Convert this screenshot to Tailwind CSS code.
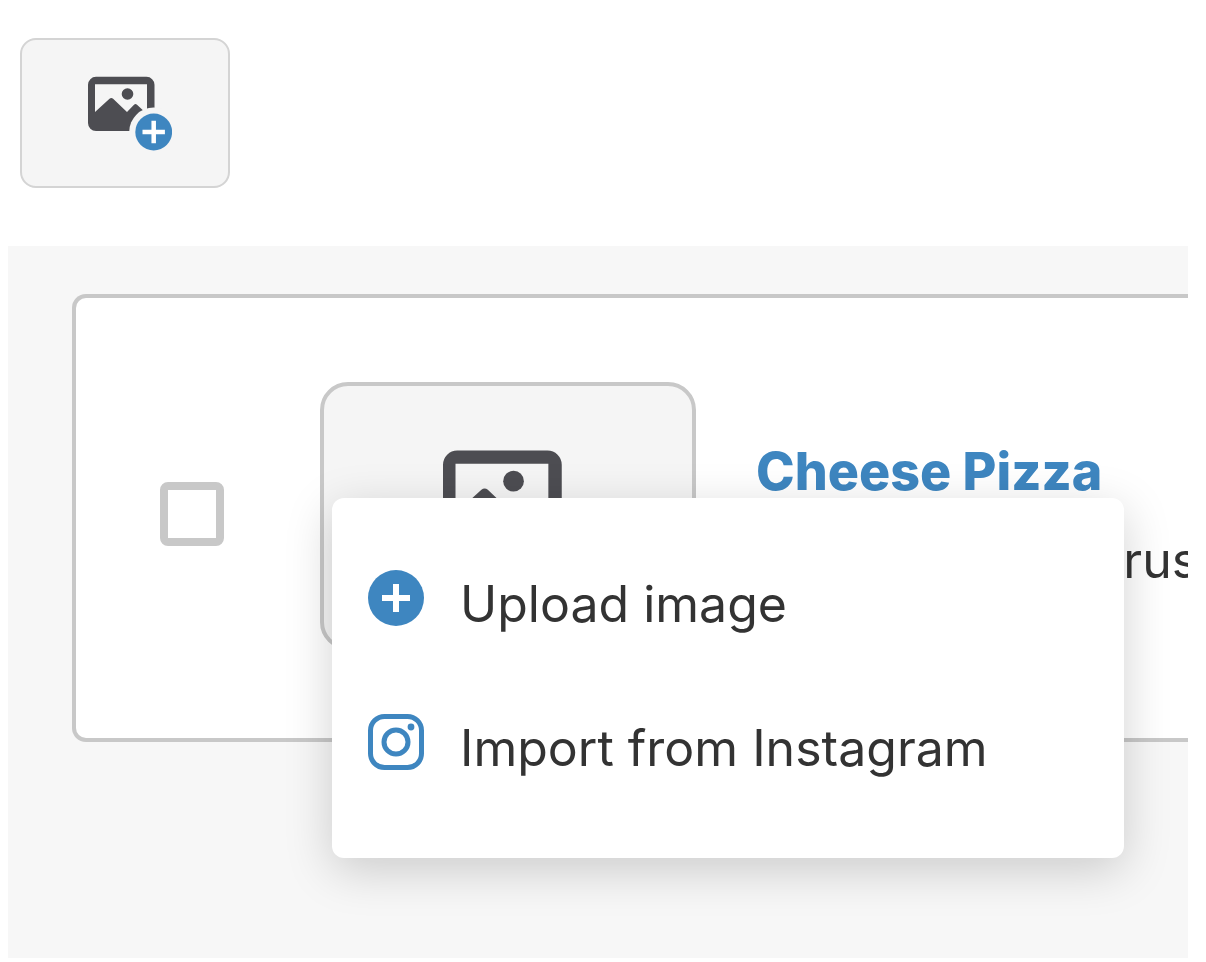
<!DOCTYPE html>
<html lang="en">
<head>
  <meta charset="UTF-8">
  <meta name="viewport" content="width=device-width, initial-scale=1.0">
  <title>Menu item image</title>
  <script src="https://cdn.jsdelivr.net/npm/@tailwindcss/browser@4"></script>
</head>
<body class="bg-white font-['Inter',sans-serif] text-[#333333]">
  <!-- Shared icon: picture with a plus badge -->
  <svg class="hidden">
    <symbol id="add-image" viewBox="0 0 84 75">
      <path fill="#4d4d52" fill-rule="evenodd" d="M8 .8h50.500a8 8 0 0 1 8 8V47a8 8 0 0 1-8 8H8a8 8 0 0 1-8-8V8.800a8 8 0 0 1 8-8ZM7 8.300V36l14.500-13.200q1.800-1.400 3.600 0L39 36l7-7.200q1.500-1.500 3 0L59 38V8.300H7Z"/>
      <circle cx="39.500" cy="18" r="5.800" fill="#4d4d52"/>
      <circle cx="65.700" cy="56" r="24.500" fill="#f5f5f5"/>
      <circle cx="65.700" cy="56" r="18.400" fill="#3e86c0"/>
      <path stroke="#fff" stroke-width="4.500" d="M54.500 56h22.400M65.700 44.800v22.400"/>
    </symbol>
  </svg>

  <main class="pt-[38px]">
    <button type="button" aria-label="Add image" class="ml-5 flex h-[150px] w-[210px] items-center justify-center rounded-2xl border-2 border-[#d4d4d4] bg-[#f5f5f5] pl-[10px]">
      <svg class="h-[75px] w-[84px]"><use href="#add-image"/></svg>
    </button>

    <section class="mt-[58px] mr-[18px] ml-2 overflow-hidden bg-[#f7f7f7] pt-12 pb-[216px] pl-16">
      <article class="flex h-[448px] items-start rounded-l-[14px] border-4 border-r-0 border-[#c8c8c8] bg-white pt-[84px] pl-[84px]">
        <input type="checkbox" aria-label="Select Cheese Pizza" class="mt-[100px] size-16 shrink-0 appearance-none rounded-lg border-8 border-[#c8c8c8] bg-white">

        <div class="relative ml-24 shrink-0">
          <button type="button" aria-label="Add image to Cheese Pizza" class="flex h-[268px] w-[376px] items-center justify-center rounded-[28px] border-4 border-[#c8c8c8] bg-[#f5f5f5] pl-5">
            <svg class="h-[134px] w-[150px]"><use href="#add-image"/></svg>
          </button>

          <!-- Image menu -->
          <div class="absolute top-[116px] left-3 z-10 flex h-[360px] w-[792px] flex-col gap-4 rounded-xl bg-white px-9 pt-[42px] shadow-[0_12px_48px_rgba(0,0,0,0.18)]">
            <button type="button" class="flex h-32 items-center gap-9 text-left text-[50px] leading-[60px]">
              <svg class="mb-3 size-14 shrink-0" viewBox="0 0 56 56">
                <circle cx="28" cy="28" r="28" fill="#3e86c0"/>
                <path stroke="#fff" stroke-width="6" d="M14 28h28M28 14v28"/>
              </svg>
              <span>Upload image</span>
            </button>
            <button type="button" class="flex h-32 items-center gap-9 text-left text-[50px] leading-[60px]">
              <svg class="mb-3 size-14 shrink-0" viewBox="0 0 56 56" fill="none" stroke="#3e86c0">
                <rect x="2.500" y="2.500" width="51" height="51" rx="14" stroke-width="5"/>
                <circle cx="28" cy="28" r="12" stroke-width="5"/>
                <circle cx="43" cy="13" r="3.400" fill="#3e86c0" stroke="none"/>
              </svg>
              <span>Import from Instagram</span>
            </button>
          </div>
        </div>

        <div class="mt-[52px] ml-[60px] whitespace-nowrap">
          <h2 class="text-[52px] leading-[76px] font-extrabold text-[#3e86c0]"><a href="#">Cheese Pizza</a></h2>
          <p class="mt-5 text-[50px] leading-[60px]">House tossed crust</p>
        </div>
      </article>
    </section>
  </main>
</body>
</html>
